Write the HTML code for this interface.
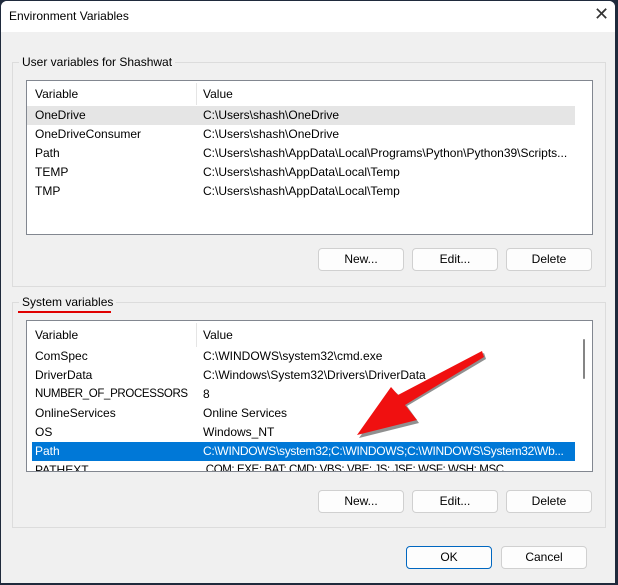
<!DOCTYPE html>
<html><head><style>
*{margin:0;padding:0;box-sizing:border-box}
body{width:618px;height:585px;background:#1f2a3c;font-family:"Liberation Sans",sans-serif;font-size:12px;color:#000;position:relative;overflow:hidden}
.win{position:absolute;left:1px;top:1px;width:614px;height:582px;background:#f0f0f0;border-radius:6px 6px 0 0;overflow:hidden}
.title{position:absolute;left:0;top:0;width:100%;height:31px;background:#fff}
.abs{position:absolute}
.grp{position:absolute;border:1px solid #dcdcdc}
.lbl{position:absolute;background:#f0f0f0;padding:0 3px;white-space:nowrap}
.list{position:absolute;background:#fff;border:1px solid #828790}
.row{position:absolute;left:0;height:19px;line-height:19px;white-space:nowrap}
.row span{position:absolute}
.n{font-size:11.5px;letter-spacing:-0.35px}
.btn{position:absolute;height:23px;border:1px solid #d0d0d0;border-radius:4px;background:#fdfdfd;text-align:center;line-height:21px}
</style></head><body>
<div class="win">
<div class="title"></div>
<div class="abs" style="left:8px;top:8px">Environment Variables</div>
<div class="abs" style="left:593px;top:3px;font-size:18px;color:#333">✕</div>

<div class="grp" style="left:11px;top:61px;width:594px;height:225px"></div>
<div class="lbl" style="left:18px;top:54px">User variables for Shashwat</div>
<div class="list" style="left:25px;top:79px;width:567px;height:155px">
 <div class="row" style="top:2px;width:548px;height:22px;line-height:22px"><span style="left:8px">Variable</span><span style="left:176px">Value</span></div>
 <div class="abs" style="left:169px;top:2px;width:1px;height:22px;background:#e5e5e5"></div>
 <div class="row" style="top:25px;width:548px;background:#e5e5e5"><span style="left:8px">OneDrive</span><span style="left:176px">C:\Users\shash\OneDrive</span></div>
 <div class="row" style="top:44px"><span style="left:8px">OneDriveConsumer</span><span style="left:176px">C:\Users\shash\OneDrive</span></div>
 <div class="row" style="top:63px"><span style="left:8px">Path</span><span style="left:176px">C:\Users\shash\AppData\Local\Programs\Python\Python39\Scripts...</span></div>
 <div class="row" style="top:82px"><span style="left:8px">TEMP</span><span style="left:176px">C:\Users\shash\AppData\Local\Temp</span></div>
 <div class="row" style="top:101px"><span style="left:8px">TMP</span><span style="left:176px">C:\Users\shash\AppData\Local\Temp</span></div>
</div>
<div class="btn" style="left:317px;top:247px;width:86px">New...</div>
<div class="btn" style="left:411px;top:247px;width:86px">Edit...</div>
<div class="btn" style="left:505px;top:247px;width:86px">Delete</div>

<div class="grp" style="left:11px;top:301px;width:594px;height:226px"></div>
<div class="lbl" style="left:18px;top:294px">System variables</div>
<div class="abs" style="left:17px;top:310px;width:93px;height:2px;background:#e00000"></div>
<div class="list" style="left:25px;top:319px;width:567px;height:152px;overflow:hidden">
 <div class="row" style="top:2px;width:548px;height:24px;line-height:24px"><span style="left:8px">Variable</span><span style="left:176px">Value</span></div>
 <div class="abs" style="left:169px;top:2px;width:1px;height:24px;background:#e5e5e5"></div>
 <div class="row" style="top:26px"><span style="left:8px">ComSpec</span><span style="left:176px">C:\WINDOWS\system32\cmd.exe</span></div>
 <div class="row" style="top:45px"><span style="left:8px">DriverData</span><span style="left:176px">C:\Windows\System32\Drivers\DriverData</span></div>
 <div class="row" style="top:64px"><span class="n" style="left:8px">NUMBER_OF_PROCESSORS</span><span style="left:176px">8</span></div>
 <div class="row" style="top:83px"><span style="left:8px">OnlineServices</span><span style="left:176px">Online Services</span></div>
 <div class="row" style="top:102px"><span style="left:8px">OS</span><span style="left:176px">Windows_NT</span></div>
 <div class="row" style="top:121px;left:5px;width:543px;background:#0078d7;color:#fff"><span style="left:3px">Path</span><span style="left:171px;letter-spacing:-0.3px">C:\WINDOWS\system32;C:\WINDOWS;C:\WINDOWS\System32\Wb...</span></div>
 <div class="row" style="top:140px"><span style="left:8px">PATHEXT</span><span style="left:176px;font-size:11.5px;letter-spacing:-0.4px">.COM;.EXE;.BAT;.CMD;.VBS;.VBE;.JS;.JSE;.WSF;.WSH;.MSC</span></div>
 <div class="abs" style="left:556px;top:18px;width:2px;height:40px;background:#858585;border-radius:1px"></div>
</div>
<div class="btn" style="left:317px;top:489px;width:86px">New...</div>
<div class="btn" style="left:411px;top:489px;width:86px">Edit...</div>
<div class="btn" style="left:505px;top:489px;width:86px">Delete</div>

<div class="btn" style="left:405px;top:545px;width:86px;border-color:#0067c0">OK</div>
<div class="btn" style="left:500px;top:545px;width:86px">Cancel</div>
</div>
<svg class="abs" style="left:0;top:0" width="618" height="585">
<polygon points="484,353 486,359 407,406 419,423 359,438 393,390 400,396" fill="#222" opacity="0.5"/>
<polygon points="482,351 484,357 405,405 417,420 357,435 391,387 398,395" fill="#f01010"/>
</svg>
</body></html>
